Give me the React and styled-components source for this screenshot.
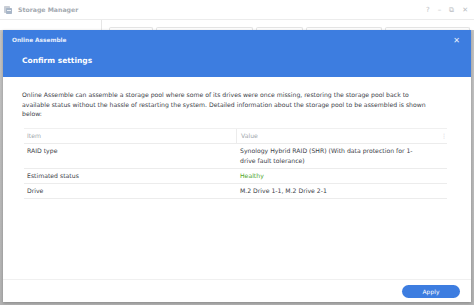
import React from 'react';
import styled, { createGlobalStyle } from 'styled-components';

const GlobalStyle = createGlobalStyle`
  html, body {
    margin: 0;
    padding: 0;
    background: #ffffff;
  }
  body {
    font-family: "DejaVu Sans", Verdana, sans-serif;
    -webkit-font-smoothing: antialiased;
  }
`;

const Screen = styled.div`
  width: 474px;
  height: 305px;
  display: flex;
  flex-direction: column;
  overflow: hidden;
  background: #ffffff;
`;

const TitleBar = styled.div`
  height: 20px;
  display: flex;
  align-items: center;
  padding: 0 6px 0 3px;
  border-bottom: 1px solid #ececec;
  box-sizing: border-box;
`;

const AppName = styled.span`
  margin-left: 5px;
  font-size: 6.2px;
  font-weight: bold;
  color: #a3a9b0;
  flex: 1;
`;

const WinControls = styled.div`
  display: flex;
  gap: 8px;
  color: #b9bdc2;
  font-size: 7px;
`;

const Toolbar = styled.div`
  height: 10px;
  display: flex;
  background: #ffffff;
`;

const Sidebar = styled.div`
  width: 110px;
  border-right: 1px solid #e6e6e6;
`;

const ToolButtons = styled.div`
  flex: 1;
  display: flex;
  gap: 3px;
  padding: 7px 4px 0 7px;
`;

const ToolButton = styled.div`
  width: ${p => p.w}px;
  border: 1px solid #e4e4e4;
  border-bottom: none;
  border-radius: 2px 2px 0 0;
`;

const Stage = styled.div`
  flex: 1;
  display: flex;
  padding: 0 3px 3px 3px;
  background: linear-gradient(#c4c4c4, #b3b3b3);
`;

const Dialog = styled.div`
  flex: 1;
  display: flex;
  flex-direction: column;
  background: #ffffff;
  box-shadow: 0 1px 3px rgba(0, 0, 0, 0.25);
`;

const DialogHeader = styled.div`
  height: 47px;
  background: #3d7de0;
  color: #ffffff;
  display: flex;
  flex-direction: column;
  box-sizing: border-box;
  padding: 5px 9px 0 9px;
`;

const HeaderTop = styled.div`
  display: flex;
  align-items: center;
  justify-content: space-between;
  height: 10px;
`;

const SmallTitle = styled.span`
  font-size: 5.8px;
  font-weight: bold;
  color: #e6eefc;
`;

const CloseX = styled.span`
  font-size: 8px;
  color: #e6eefc;
  margin-right: 2px;
`;

const BigTitle = styled.div`
  margin-top: 11px;
  padding-left: 10px;
  font-size: 7.5px;
  font-weight: bold;
`;

const DialogBody = styled.div`
  flex: 1;
  padding: 13px 37px 0 19px;
`;

const Intro = styled.p`
  margin: 0 0 9px 0;
  font-size: 6.15px;
  line-height: 9.6px;
  color: #3c4148;
`;

const Table = styled.div`
  margin-left: 2px;
  margin-right: -13px;
  border-top: 1px solid #f0f0f0;
`;

const Row = styled.div`
  display: grid;
  grid-template-columns: 212px 1fr 10px;
  border-bottom: 1px solid #ececec;
  font-size: 6.15px;
  line-height: 9.6px;
  color: ${p => (p.head ? '#a2a7ad' : '#3c4148')};
`;

const Cell = styled.div`
  padding: 2.3px 0 2.3px ${p => (p.value ? '4px' : '3px')};
  padding-right: ${p => (p.value ? '12px' : '0')};
  border-left: ${p => (p.sep ? '1px solid #ececec' : 'none')};
  color: ${p => p.color || 'inherit'};
`;

const Grip = styled.div`
  color: #c0c4c8;
  font-size: 6px;
  text-align: right;
  padding-top: 2px;
`;

const Footer = styled.div`
  height: 22px;
  border-top: 1px solid #f0f0f0;
  display: flex;
  align-items: center;
  justify-content: flex-end;
  padding-right: 11px;
`;

const ApplyButton = styled.button`
  width: 58px;
  height: 13px;
  border: none;
  border-radius: 7px;
  background: #3d7de0;
  color: #ffffff;
  font-family: "DejaVu Sans", Verdana, sans-serif;
  font-size: 6px;
  padding: 0;
`;

const AppIcon = () => (
  <svg width="10" height="10" viewBox="0 0 10 10">
    <rect x="1" y="1" width="6" height="7" rx="0.8" fill="#c9ced6" />
    <rect x="3" y="3" width="6" height="6" rx="0.8" fill="#a8b6c8" />
    <rect x="4" y="5" width="4" height="1" fill="#eef2f7" />
  </svg>
);

const rows = [
  { item: 'RAID type', value: 'Synology Hybrid RAID (SHR) (With data protection for 1-drive fault tolerance)' },
  { item: 'Estimated status', value: 'Healthy', color: '#4fa62a' },
  { item: 'Drive', value: 'M.2 Drive 1-1, M.2 Drive 2-1' },
];

export default function App() {
  return (
    <Screen>
      <GlobalStyle />
      <TitleBar>
        <AppIcon />
        <AppName>Storage Manager</AppName>
        <WinControls>
          <span>?</span>
          <span>–</span>
          <span>⧉</span>
          <span>✕</span>
        </WinControls>
      </TitleBar>
      <Toolbar>
        <Sidebar />
        <ToolButtons>
          <ToolButton w={42} />
          <ToolButton w={95} />
          <ToolButton w={45} />
          <ToolButton w={74} />
          <ToolButton w={83} />
        </ToolButtons>
      </Toolbar>
      <Stage>
        <Dialog>
          <DialogHeader>
            <HeaderTop>
              <SmallTitle>Online Assemble</SmallTitle>
              <CloseX>✕</CloseX>
            </HeaderTop>
            <BigTitle>Confirm settings</BigTitle>
          </DialogHeader>
          <DialogBody>
            <Intro>
              Online Assemble can assemble a storage pool where some of its drives were once missing, restoring the
              storage pool back to available status without the hassle of restarting the system. Detailed information
              about the storage pool to be assembled is shown below:
            </Intro>
            <Table>
              <Row head>
                <Cell>Item</Cell>
                <Cell value sep>Value</Cell>
                <Grip>⋮</Grip>
              </Row>
              {rows.map(r => (
                <Row key={r.item}>
                  <Cell>{r.item}</Cell>
                  <Cell value color={r.color}>{r.value}</Cell>
                  <div />
                </Row>
              ))}
            </Table>
          </DialogBody>
          <Footer>
            <ApplyButton>Apply</ApplyButton>
          </Footer>
        </Dialog>
      </Stage>
    </Screen>
  );
}
